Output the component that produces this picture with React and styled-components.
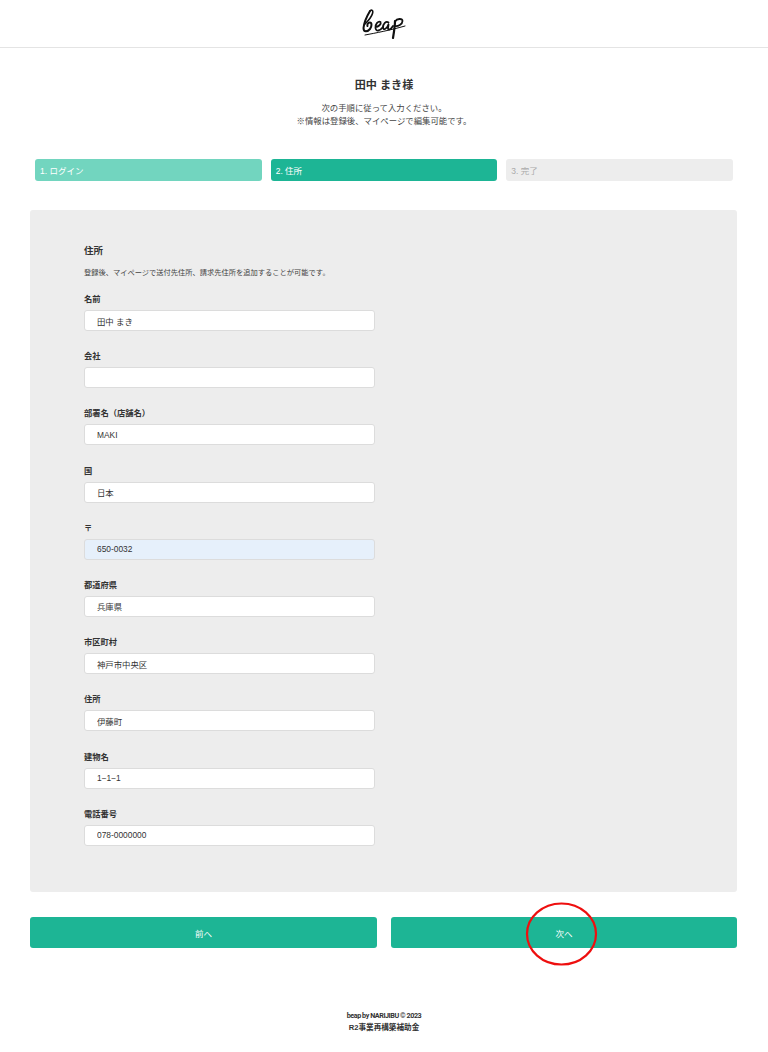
import React from 'react';
import styled, { createGlobalStyle } from 'styled-components';

const Global = createGlobalStyle`
  html, body { margin: 0; padding: 0; background: #fff; }
  body { font-family: "Liberation Sans", "Noto Sans CJK JP", sans-serif; color: #333; }
  * { box-sizing: border-box; }
`;
const Page = styled.div`
  position: relative;
  width: 768px;
  height: 1052px;
  overflow: hidden;
`;
const Header = styled.header`
  height: 48px;
  border-bottom: 1px solid #e4e4e4;
  display: flex;
  justify-content: center;
  align-items: center;
`;
const Intro = styled.section`
  padding-top: 30px;
  text-align: center;
`;
const Title = styled.h1`
  margin: 0 0 10px;
  font-size: 11.1px;
  line-height: 14px;
  font-weight: 700;
  color: #333;
`;
const Note = styled.p`
  margin: 0;
  font-size: 8.4px;
  line-height: 13px;
  color: #444;
`;
const Steps = styled.div`
  display: grid;
  grid-template-columns: repeat(3, 1fr);
  gap: 9px;
  margin: 31px 35px 0;
`;
const Step = styled.div`
  height: 22px;
  border-radius: 3px;
  padding: 0 0 1px 5px;
  display: flex;
  align-items: center;
  font-size: 8.5px;
  background: ${p => p.$bg};
  color: ${p => p.$fg};
`;
const Panel = styled.section`
  margin: 29px 31px 0 30px;
  height: 682px;
  background: #ededed;
  border-radius: 3px;
  padding: 34px 0 0 54px;
`;
const PanelTitle = styled.h2`
  margin: 0;
  font-size: 9.5px;
  line-height: 13px;
  font-weight: 700;
  color: #333;
`;
const PanelNote = styled.p`
  margin: 11px 0 0;
  font-size: 7.25px;
  line-height: 10px;
  color: #444;
`;
const FieldList = styled.div`
  margin-top: 16px;
  display: flex;
  flex-direction: column;
  gap: 20.2px;
`;
const Field = styled.label`
  display: flex;
  flex-direction: column;
  gap: 5px;
`;
const FieldName = styled.span`
  font-size: 8.25px;
  line-height: 11px;
  font-weight: 700;
  color: #333;
`;
const TextInput = styled.input`
  width: 291px;
  height: 21px;
  border: 1px solid #dcdcdc;
  border-radius: 3px;
  padding: 0 12px;
  font: 8.4px "Liberation Sans", "Noto Sans CJK JP", sans-serif;
  color: #333;
  background: ${p => (p.$filled ? '#e6f0fb' : '#fff')};
  outline: none;
`;
const Buttons = styled.div`
  display: grid;
  grid-template-columns: 347px 346px;
  gap: 14px;
  margin: 25px 0 0 30px;
`;
const Button = styled.button`
  height: 31px;
  border: 0;
  border-radius: 3px;
  background: #1db595;
  color: #fff;
  font: 8.5px "Liberation Sans", "Noto Sans CJK JP", sans-serif;
`;
const Footer = styled.footer`
  margin-top: 62px;
  text-align: center;
  font-size: 7.6px;
  line-height: 11.5px;
  font-weight: 700;
  color: #333;
`;
const FooterBrand = styled.div`
  font-family: "Roboto", "Liberation Sans", sans-serif;
  font-size: 7.2px;
  letter-spacing: -0.45px;
`;
const Annotation = styled.svg`
  position: absolute;
  left: 524px;
  top: 900px;
`;

const Logo = () => (
  <svg width="46" height="30" viewBox="0 0 46 30" fill="none" stroke="#111" strokeLinecap="round" strokeLinejoin="round">
    <path d="M9 2 C6 7 3 14 2.5 19 C2.5 23.5 6.5 23 9 20 C11 17.5 11 13.5 8.8 13.5 C6.8 13.5 6 16 6.5 17" strokeWidth="2" />
    <path d="M9 2 C10.5 0.5 12.5 1 11.5 4.5 C10.5 8 7 12 4 15" strokeWidth="1.6" />
    <path d="M14.5 18 C17.5 18 20.5 15 19.5 13 C17.5 11.5 14 15 14.5 19 C15 23 19 22 22 18" strokeWidth="1.8" />
    <path d="M27.5 13.5 C25 11.5 22 15 22 18.5 C22 21.5 25.5 20.5 27.5 15.5 L27 19 C27 21.5 29.5 21 32 17" strokeWidth="1.8" />
    <path d="M34 12 C34 16 33 23 32 29" strokeWidth="2.2" />
    <path d="M34 12.5 C36 9.5 41.5 9 41.5 12 C41.5 15 37 18 33.5 17" strokeWidth="1.8" />
    <path d="M4 26 C15 24 30 21 44 17" strokeWidth="1" />
  </svg>
);

const fields = [
  ['名前', '田中 まき'],
  ['会社', ''],
  ['部署名（店舗名）', 'MAKI'],
  ['国', '日本'],
  ['〒', '650-0032', true],
  ['都道府県', '兵庫県'],
  ['市区町村', '神戸市中央区'],
  ['住所', '伊藤町'],
  ['建物名', '1−1−1'],
  ['電話番号', '078-0000000'],
];

export default function App() {
  return (
    <Page>
      <Global />
      <Header><Logo /></Header>
      <Intro>
        <Title>田中 まき様</Title>
        <Note>次の手順に従って入力ください。</Note>
        <Note>※情報は登録後、マイページで編集可能です。</Note>
      </Intro>
      <Steps>
        <Step $bg="#72d5bf" $fg="#fff">1. ログイン</Step>
        <Step $bg="#1db595" $fg="#fff">2. 住所</Step>
        <Step $bg="#ededed" $fg="#aaa">3. 完了</Step>
      </Steps>
      <Panel>
        <PanelTitle>住所</PanelTitle>
        <PanelNote>登録後、マイページで送付先住所、請求先住所を追加することが可能です。</PanelNote>
        <FieldList>
          {fields.map(([name, value, filled]) => (
            <Field key={name}>
              <FieldName>{name}</FieldName>
              <TextInput readOnly value={value} $filled={filled} />
            </Field>
          ))}
        </FieldList>
      </Panel>
      <Buttons>
        <Button>前へ</Button>
        <Button>次へ</Button>
      </Buttons>
      <Footer>
        <FooterBrand>beap by NARIJIBU © 2023</FooterBrand>
        <div>R2事業再構築補助金</div>
      </Footer>
      <Annotation width="76" height="68" viewBox="0 0 76 68" fill="none">
        <ellipse cx="37.5" cy="34" rx="34.5" ry="30.5" stroke="#ee0f0f" strokeWidth="2.2" />
      </Annotation>
    </Page>
  );
}
